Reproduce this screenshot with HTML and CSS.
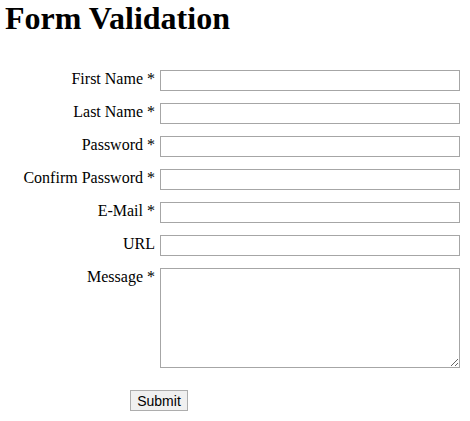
FILE: index.html
```html
<!DOCTYPE html>
<html>
<head>
<meta charset="utf-8">
<title>Form Validation</title>
<link rel="stylesheet" href="styles.css">
</head>
<body>
<h1 class="title">Form Validation</h1>
<form class="form">
  <label class="lbl" for="fn">First Name *</label>
  <input class="field" id="fn" type="text">
  <label class="lbl" for="ln">Last Name *</label>
  <input class="field" id="ln" type="text">
  <label class="lbl" for="pw">Password *</label>
  <input class="field" id="pw" type="password">
  <label class="lbl" for="cpw">Confirm Password *</label>
  <input class="field" id="cpw" type="password">
  <label class="lbl" for="em">E-Mail *</label>
  <input class="field" id="em" type="text">
  <label class="lbl" for="url">URL</label>
  <input class="field" id="url" type="text">
  <label class="lbl" for="msg">Message *</label>
  <textarea class="field area" id="msg"></textarea>
  <div class="actions"><button class="submit" type="button">Submit</button></div>
</form>
</body>
</html>
```
FILE: styles.css
```css
html, body {
  margin: 0;
  background: #ffffff;
}
body {
  padding: 0 5px;
  font-family: "Liberation Serif", "Times New Roman", serif;
  font-size: 16px;
  color: #000;
}
.title {
  margin: 0;
  font-size: 32px;
  font-weight: bold;
  line-height: 37px;
}
.form {
  display: grid;
  grid-template-columns: 150px 300px;
  column-gap: 5px;
  row-gap: 12px;
  margin-top: 33px;
  align-items: start;
}
.lbl {
  text-align: right;
  line-height: 18px;
  padding-top: 0;
  white-space: nowrap;
}
.field {
  box-sizing: border-box;
  width: 300px;
  height: 21px;
  margin: 0;
  border: 1px solid #a6a6a6;
  background: #fff;
  padding: 1px 2px;
  font-family: "Liberation Sans", Arial, sans-serif;
  font-size: 13px;
  border-radius: 0;
  outline: none;
}
.area {
  height: 100px;
  resize: both;
}
.actions {
  grid-column: 1 / span 2;
  padding-left: 125px;
  margin-top: 10px;
}
.submit {
  box-sizing: border-box;
  height: 21px;
  width: 58px;
  padding: 0;
  margin: 0;
  font-family: "Liberation Sans", Arial, sans-serif;
  font-size: 14px;
  color: #000;
  background: #f0f0f0;
  border: 1px solid #adadad;
  border-radius: 0;
}
```
